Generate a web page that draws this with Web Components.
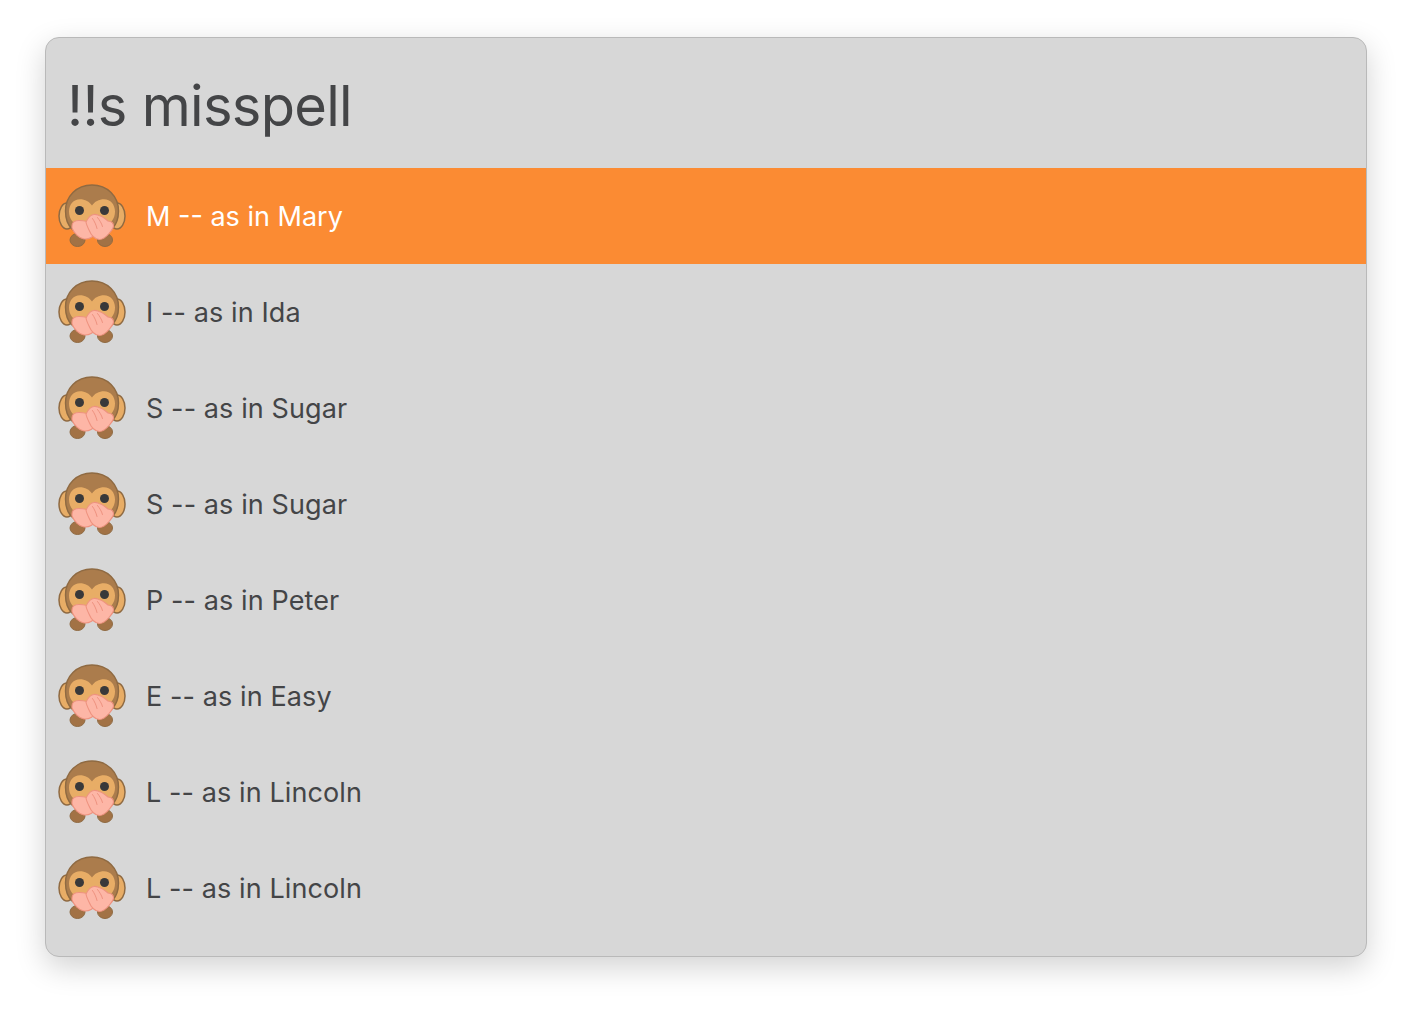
<!DOCTYPE html>
<html>
<head>
<meta charset="utf-8">
<title>!!s misspell</title>
<style>
    html, body { margin: 0; height: 100%; background: #fff; }
    body { padding: 37px 45px 53px; box-sizing: border-box; height: 1010px; overflow: hidden; }
</style>
</head>
<body>
<result-window title-text="!!s misspell">
    <result-row selected>M -- as in Mary</result-row>
    <result-row>I -- as in Ida</result-row>
    <result-row>S -- as in Sugar</result-row>
    <result-row>S -- as in Sugar</result-row>
    <result-row>P -- as in Peter</result-row>
    <result-row>E -- as in Easy</result-row>
    <result-row>L -- as in Lincoln</result-row>
    <result-row>L -- as in Lincoln</result-row>
</result-window>
<script>
class MonkeyIcon extends HTMLElement {
    connectedCallback() {
        this.attachShadow({ mode: 'open' });
        this.shadowRoot.innerHTML = `
            <style>
                :host { display: block; width: 68px; height: 64px; }
                svg { display: block; }
            </style>
            <svg width="68" height="64" viewBox="0 0 68 64">
                <!-- feet -->
                <ellipse cx="19.500" cy="56" rx="7.500" ry="6.500" fill="#a27245" stroke="#8f6a42" stroke-width="1"/>
                <ellipse cx="47" cy="56" rx="7.500" ry="6.500" fill="#a27245" stroke="#8f6a42" stroke-width="1"/>
                <!-- ears -->
                <ellipse cx="9" cy="32" rx="8" ry="13" fill="#e8ad66" stroke="#8f6a42" stroke-width="1.500"/>
                <ellipse cx="59" cy="32" rx="8" ry="13" fill="#e8ad66" stroke="#8f6a42" stroke-width="1.500"/>
                <!-- head -->
                <path d="M34 1C18.500 1 7.500 12.500 7.500 27c0 14.500 7.500 24 26.500 24s26.500-9.500 26.500-24C60.500 12.500 49.500 1 34 1z" fill="#ab7c4c" stroke="#8f6a42" stroke-width="1.400"/>
                <!-- face -->
                <path d="M34 21.500C31.500 17.500 27 15.200 22 15.200 15.500 15.200 11 20.500 11 27.500c0 7 4 12.500 10 14h26c6-1.500 10-7 10-14 0-7-4.500-12.300-11-12.300-5 0-9.500 2.300-12 6.300z" fill="#e8ad66"/>
                <!-- eyes -->
                <circle cx="21.500" cy="26.500" r="4.500" fill="#39393a"/>
                <circle cx="46.500" cy="26.500" r="4.500" fill="#39393a"/>
                <!-- hands -->
                <path d="M14 42C14 38 17 36.500 21 36.500 25 36.500 30 37 33 40L38 48C36 53 31 55.500 26 55 21 54.500 16 49 14 44z" fill="#fdb6a6" stroke="#ee927f" stroke-width="1.100" stroke-linejoin="round"/>
                <path d="M28 38C30 34 33 30.500 36 30.500 38 30 39.500 31 41 31.500 44 32 47 34.500 50 37 53 37.200 55.500 39 55.500 42 55.500 45 53 47 51 49.500 48 53 45 55.500 41.500 55.500 37 55.500 33 51 31.500 47 30 44 28.500 41 28 38z" fill="#fdb6a6" stroke="#ee927f" stroke-width="1.100" stroke-linejoin="round"/>
                <path d="M34.500 34.500c2 3 3.500 6 4.500 10M39.500 33.500c2 2.500 4 5.500 5 9" fill="none" stroke="#ee927f" stroke-width="1" stroke-linecap="round"/>
            </svg>
        `;
    }
}
customElements.define('monkey-icon', MonkeyIcon);

class ResultRow extends HTMLElement {
    connectedCallback() {
        this.attachShadow({ mode: 'open' });
        this.shadowRoot.innerHTML = `
            <style>
                :host {
                    display: flex;
                    align-items: center;
                    height: 96px;
                    padding-left: 12px;
                    color: #444547;
                    font-size: 27px;
                    letter-spacing: 0.1px;
                    box-sizing: border-box;
                }
                :host([selected]) {
                    background-color: #fb8b33;
                    color: #fff;
                    letter-spacing: 0;
                }
                monkey-icon { margin-right: 20px; }
            </style>
            <monkey-icon></monkey-icon>
            <slot></slot>
        `;
    }
}
customElements.define('result-row', ResultRow);

class ResultWindow extends HTMLElement {
    connectedCallback() {
        this.attachShadow({ mode: 'open' });
        this.shadowRoot.innerHTML = `
            <style>
                :host {
                    display: block;
                    width: 1322px;
                    height: 920px;
                    box-sizing: border-box;
                    background-color: #d7d7d7;
                    border: 1px solid #b9b9b9;
                    border-radius: 14px;
                    box-shadow: 0 10px 30px rgba(0, 0, 0, 0.18);
                    font-family: Inter, "Liberation Sans", sans-serif;
                    overflow: hidden;
                }
                .title {
                    height: 130px;
                    display: flex;
                    align-items: center;
                    padding: 5px 0 0 21px;
                    box-sizing: border-box;
                    font-size: 56px;
                    color: #444547;
                    letter-spacing: -0.7px;
                }
            </style>
            <div class="title"></div>
            <slot></slot>
        `;
        this.shadowRoot.querySelector('.title').textContent = this.getAttribute('title-text');
    }
}
customElements.define('result-window', ResultWindow);
</script>
</body>
</html>
